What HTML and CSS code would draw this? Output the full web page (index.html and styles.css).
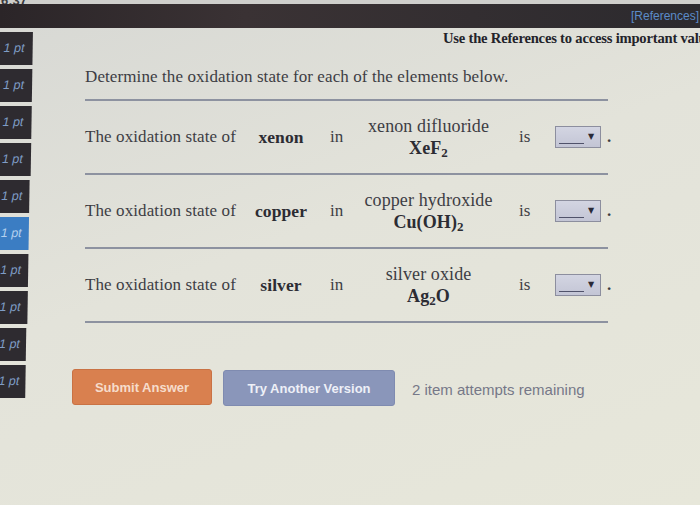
FILE: index.html
```html
<!DOCTYPE html>
<html>
<head>
<meta charset="utf-8">
<link rel="stylesheet" href="styles.css">
</head>
<body>
<div class="page">
  <div class="status"><span>6:37</span></div>
  <div class="topbar"><span class="refs">[References]</span></div>
  <div class="main">
    <nav class="sidebar">
      <div class="tile">1 pt</div>
      <div class="tile">1 pt</div>
      <div class="tile">1 pt</div>
      <div class="tile">1 pt</div>
      <div class="tile">1 pt</div>
      <div class="tile active">1 pt</div>
      <div class="tile">1 pt</div>
      <div class="tile">1 pt</div>
      <div class="tile">1 pt</div>
      <div class="tile">1 pt</div>
    </nav>
    <section class="content">
      <p class="userefs">Use the References to access important values if needed for this question.</p>
      <p class="lead">Determine the oxidation state for each of the elements below.</p>
      <div class="rule"></div>
      <div class="row">
        <span class="txt">The oxidation state of</span>
        <span class="elem">xenon</span>
        <span class="in">in</span>
        <span class="chem"><span class="name">xenon difluoride</span><span class="formula">XeF<sub>2</sub></span></span>
        <span class="is">is</span>
        <span class="select"><span class="blank"></span><span class="arrow">&#9660;</span></span>
        <span class="dot">.</span>
      </div>
      <div class="rule"></div>
      <div class="row">
        <span class="txt">The oxidation state of</span>
        <span class="elem">copper</span>
        <span class="in">in</span>
        <span class="chem"><span class="name">copper hydroxide</span><span class="formula">Cu(OH)<sub>2</sub></span></span>
        <span class="is">is</span>
        <span class="select"><span class="blank"></span><span class="arrow">&#9660;</span></span>
        <span class="dot">.</span>
      </div>
      <div class="rule"></div>
      <div class="row">
        <span class="txt">The oxidation state of</span>
        <span class="elem">silver</span>
        <span class="in">in</span>
        <span class="chem"><span class="name">silver oxide</span><span class="formula">Ag<sub>2</sub>O</span></span>
        <span class="is">is</span>
        <span class="select"><span class="blank"></span><span class="arrow">&#9660;</span></span>
        <span class="dot">.</span>
      </div>
      <div class="rule"></div>
      <div class="actions">
        <button class="btn submit">Submit Answer</button>
        <button class="btn another">Try Another Version</button>
        <span class="attempts">2 item attempts remaining</span>
      </div>
    </section>
  </div>
</div>
</body>
</html>
```
FILE: styles.css
```css
html, body {
  margin: 0;
  padding: 0;
}
body {
  width: 700px;
  height: 505px;
  overflow: hidden;
  background: linear-gradient(160deg, #d7d8d4 0%, #e3e3da 45%, #e7e7da 100%);
  font-family: "Liberation Serif", "Times New Roman", serif;
}
.page {
  width: 700px;
  height: 505px;
  overflow: hidden;
}
.status {
  height: 4px;
  overflow: hidden;
  background: #cfcfcc;
}
.status span {
  display: block;
  margin-top: -6px;
  padding-left: 1px;
  font-family: "Liberation Sans", Arial, sans-serif;
  font-weight: bold;
  font-size: 13px;
  line-height: 13px;
  color: #3a3a3e;
}
.topbar {
  height: 24px;
  background: linear-gradient(90deg, #2b2528 0%, #3a3234 35%, #2c2a2e 100%);
  display: flex;
  justify-content: flex-end;
  align-items: center;
}
.refs {
  font-family: "Liberation Sans", Arial, sans-serif;
  font-size: 12px;
  color: #5b8bc9;
  padding-right: 1px;
}
.main {
  display: flex;
  gap: 3px;
}
.sidebar {
  width: 33px;
  display: flex;
  flex-direction: column;
  gap: 4px;
  padding-top: 4px;
  transform: skewX(-0.9deg);
  transform-origin: top left;
}
.tile {
  height: 33px;
  width: 33px;
  background: #2e2b30;
  color: #7f9dc6;
  font-family: "Liberation Sans", Arial, sans-serif;
  font-style: italic;
  font-size: 12.5px;
  line-height: 33px;
  padding-left: 4px;
  box-sizing: border-box;
  overflow: hidden;
  white-space: nowrap;
}
.tile:nth-child(n+5) { width: 32px; }
.tile:nth-child(n+9) { width: 31px; }
.tile.active {
  background: #3b7dc3;
  color: #b4d0ee;
}
.content {
  flex: 1;
  padding-left: 49px;
  padding-top: 2px;
}
.userefs {
  margin: 0;
  padding-left: 358px;
  white-space: nowrap;
  font-weight: bold;
  font-size: 14.6px;
  line-height: 16px;
  color: #23232a;
  letter-spacing: -0.2px;
}
.lead {
  margin: 21px 0 12px 0;
  font-size: 17px;
  letter-spacing: 0.1px;
  line-height: 20px;
  color: #3d3d44;
}
.rule {
  width: 523px;
  height: 2px;
  background: #8d92a0;
}
.row {
  width: 523px;
  display: grid;
  grid-template-columns: 165px 62px 48px 137px 58px 46px auto;
  align-items: center;
  padding: 14px 0;
  font-size: 17px;
  letter-spacing: 0.1px;
  color: #3d3d44;
}
.elem {
  font-weight: bold;
  font-size: 17.5px;
  text-align: center;
  color: #2c2c33;
}
.in {
  padding-left: 18px;
}
.chem {
  display: flex;
  flex-direction: column;
  align-items: center;
  line-height: 22px;
  font-size: 18px;
  white-space: nowrap;
}
.formula {
  font-weight: bold;
  color: #2c2c33;
}
.formula sub {
  font-size: 13px;
  line-height: 0;
  vertical-align: -3px;
}
.is {
  padding-left: 22px;
}
.select {
  width: 46px;
  height: 22px;
  box-sizing: border-box;
  border: 1px solid #8c8e9e;
  background: linear-gradient(#d3d5e2, #c3c5d5);
  display: flex;
  align-items: center;
  padding: 0 4px 0 3px;
  gap: 4px;
}
.blank {
  width: 25px;
  height: 10px;
  border-bottom: 1px solid #50526a;
  align-self: flex-start;
  margin-top: 6px;
}
.arrow {
  font-family: "DejaVu Sans", sans-serif;
  font-size: 8px;
  color: #2a2a36;
  line-height: 1;
}
.dot {
  padding-left: 6px;
  font-weight: bold;
}
.actions {
  margin-top: 45px;
  margin-left: -13px;
  display: flex;
  align-items: center;
}
.btn {
  height: 36px;
  border-radius: 3px;
  font-family: "Liberation Sans", Arial, sans-serif;
  font-weight: bold;
  font-size: 13px;
  padding: 0;
  cursor: pointer;
}
.submit {
  width: 140px;
  background: #d9804f;
  border: 1px solid #c97244;
  color: #f6dccb;
}
.another {
  width: 172px;
  margin-left: 11px;
  margin-top: 2px;
  background: #8a96ba;
  border: 1px solid #7f8bb0;
  color: #eef0f7;
}
.attempts {
  margin-left: 17px;
  margin-top: 4px;
  font-family: "Liberation Sans", Arial, sans-serif;
  font-size: 15px;
  color: #767888;
}
```
